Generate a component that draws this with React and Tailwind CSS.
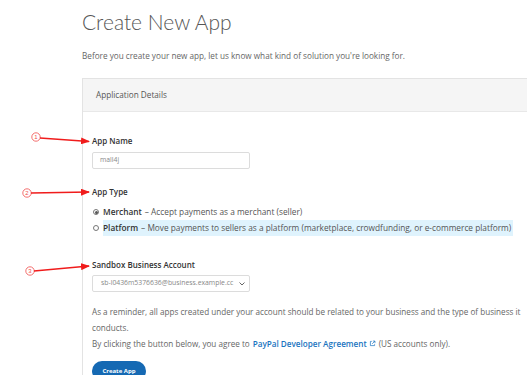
import React from "react";

function Annotations() {
  return (
    <svg
      className="absolute left-0 top-0 pointer-events-none"
      width="527"
      height="375"
      viewBox="0 0 527 375"
    >
      <defs>
        <marker id="head" markerWidth="9" markerHeight="7" refX="8" refY="3.5" orient="auto" markerUnits="userSpaceOnUse">
          <path d="M0,0 L9,3.5 L0,7 z" fill="#f01c1c" />
        </marker>
      </defs>
      {/* 1 */}
      <circle cx="36" cy="137" r="4.2" fill="none" stroke="#f04a4a" strokeWidth="0.8" />
      <text x="36" y="139.3" fontSize="6" textAnchor="middle" fill="#f04a4a" fontFamily="Liberation Sans, sans-serif">1</text>
      <path d="M40 138 L89 141.5" stroke="#f01c1c" strokeWidth="1.6" markerEnd="url(#head)" />
      {/* 2 */}
      <circle cx="27" cy="193" r="4.2" fill="none" stroke="#f04a4a" strokeWidth="0.8" />
      <text x="27" y="195.3" fontSize="6" textAnchor="middle" fill="#f04a4a" fontFamily="Liberation Sans, sans-serif">2</text>
      <path d="M31 193 L89 192" stroke="#f01c1c" strokeWidth="1.6" markerEnd="url(#head)" />
      {/* 3 */}
      <circle cx="30" cy="271" r="4.2" fill="none" stroke="#f04a4a" strokeWidth="0.8" />
      <text x="30" y="273.3" fontSize="6" textAnchor="middle" fill="#f04a4a" fontFamily="Liberation Sans, sans-serif">3</text>
      <path d="M34 271 L89 266" stroke="#f01c1c" strokeWidth="1.6" markerEnd="url(#head)" />
    </svg>
  );
}

export default function App() {
  return (
    <div
      className="relative w-[527px] h-[375px] overflow-hidden bg-white text-[#555]"
      style={{ fontFamily: "'Open Sans', 'Noto Sans', sans-serif" }}
    >
      <div className="pl-[82px] pt-[7px]">
        <h1
          className="text-[21px] font-light leading-[30px] text-[#555]"
          style={{ fontFamily: "Lato, 'Open Sans', sans-serif" }}
        >
          Create New App
        </h1>
        <p className="mt-[14px] text-[8.2px] leading-[10px] text-[#666]">
          Before you create your new app, let us know what kind of solution you&apos;re looking for.
        </p>

        {/* Card */}
        <div className="mt-[17px] w-[460px] border-l border-t border-[#e3e3e3]">
          <div className="h-[33px] bg-[#f5f5f5] border-b border-[#e8e8e8] flex items-center pl-[13px] text-[8.2px] text-[#555]">
            Application Details
          </div>

          <div className="pl-[9px] pt-[23px]">
            {/* App name */}
            <div className="text-[8px] font-semibold text-[#333] leading-[12px]">App Name</div>
            <div className="mt-[5px] w-[158px] h-[17px] border border-[#dcdcdc] rounded-[2px] flex items-center pl-[7px] text-[6.8px] text-[#888]">
              mall4j
            </div>

            {/* App type */}
            <div className="mt-[17px] text-[8px] font-semibold text-[#333] leading-[12px]">App Type</div>
            <div className="mt-[8px] flex flex-col gap-[2px] text-[8.3px] leading-[12px]">
              <div className="flex items-center">
                <span className="w-[6px] h-[6px] rounded-full border border-[#777] flex items-center justify-center ml-[1px] mr-[4px]">
                  <span className="w-[3px] h-[3px] rounded-full bg-[#555]" />
                </span>
                <span className="font-semibold text-[#333]">Merchant</span>
                <span className="ml-[3px]">– Accept payments as a merchant (seller)</span>
              </div>
              <div className="flex items-center">
                <span className="w-[6px] h-[6px] rounded-full border border-[#777] ml-[1px] mr-[4px]" />
                <span className="bg-[#dff3fd] pr-[2px] py-[2px] whitespace-nowrap">
                  <span className="font-semibold text-[#333]">Platform</span>
                  <span className="ml-[3px]">
                    – Move payments to sellers as a platform (marketplace, crowdfunding, or e-commerce platform)
                  </span>
                </span>
              </div>
            </div>

            {/* Sandbox */}
            <div className="mt-[23px] text-[8px] font-semibold text-[#333] leading-[12px]">
              Sandbox Business Account
            </div>
            <div className="mt-[4px] w-[158px] h-[17px] border border-[#dcdcdc] rounded-[2px] flex items-center pl-[8px] pr-[4px] text-[6.85px] text-[#888]">
              <span className="flex-1 whitespace-nowrap">
                sb-l0436m5376636@business.example.cc
              </span>
              <svg width="6" height="4" viewBox="0 0 6 4" className="ml-[2px] shrink-0">
                <path d="M0.5 0.5 L3 3 L5.5 0.5" fill="none" stroke="#666" strokeWidth="1" />
              </svg>
            </div>

            <div className="mt-[12px] text-[8.15px] leading-[16px] text-[#666] w-[436px]">
              As a reminder, all apps created under your account should be related to your business and the type of business
              it conducts.
            </div>
            <div className="text-[8.15px] leading-[15px] text-[#666] flex items-center whitespace-nowrap">
              By clicking the button below, you agree to
              <span className="ml-[3px] font-semibold text-[#1a74c0]">PayPal Developer Agreement</span>
              <svg width="7" height="7" viewBox="0 0 10 10" className="ml-[2px]">
                <path d="M4 2 H2 V8 H8 V6" fill="none" stroke="#1a74c0" strokeWidth="1" />
                <path d="M5.5 1.5 H8.5 V4.5 M8.5 1.5 L4.5 5.5" fill="none" stroke="#1a74c0" strokeWidth="1" />
              </svg>
              <span className="ml-[3px]">(US accounts only).</span>
            </div>

            <button className="mt-[10px] w-[54px] h-[20px] rounded-full bg-[#1569b3] text-white text-[6px] font-bold flex items-center justify-center">
              Create App
            </button>
          </div>
        </div>
      </div>
      <Annotations />
    </div>
  );
}
